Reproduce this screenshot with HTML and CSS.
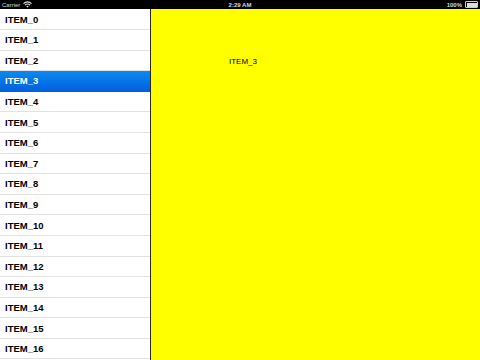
FILE: index.html
```html
<!DOCTYPE html>
<html>
<head>
    <title>Split View</title>
    <link rel="stylesheet" href="styles.css">
</head>
<body>
    <div class="status-bar">
        <div class="status-left">
            <span>Carrier</span>
            <svg class="wifi" width="9" height="7" viewBox="0 0 9 7">
                <path d="M0.5 2.6 A5.5 5.5 0 0 1 8.5 2.6" fill="none" stroke="#ddd" stroke-width="1.1"/>
                <path d="M2 4.1 A3.4 3.4 0 0 1 7 4.1" fill="none" stroke="#ddd" stroke-width="1.1"/>
                <path d="M4.5 6.6 L3.3 5.4 A1.7 1.7 0 0 1 5.7 5.4 Z" fill="#ddd"/>
            </svg>
        </div>
        <div class="status-time">2:29 AM</div>
        <div class="status-right">
            <span>100%</span>
            <span class="battery"><span class="battery-fill"></span></span>
        </div>
    </div>

    <div class="split">
        <ul class="master" id="master"></ul>
        <div class="detail">
            <div class="detail-label" id="detail-label">ITEM_3</div>
        </div>
    </div>

    <script>
        // Build the item list
        const master = document.getElementById('master');
        for (let i = 0; i < 17; i++) {
            const row = document.createElement('li');
            row.className = 'row' + (i === 3 ? ' selected' : '');
            row.textContent = 'ITEM_' + i;
            master.appendChild(row);
        }
    </script>
</body>
</html>
```
FILE: styles.css
```css
body {
    margin: 0;
    width: 480px;
    height: 360px;
    overflow: hidden;
    font-family: "Liberation Sans", Arial, sans-serif;
    background-color: #000;
}
.status-bar {
    height: 9.4px;
    background-color: #000;
    color: #d8d8d8;
    font-size: 6px;
    font-weight: bold;
    display: flex;
    align-items: center;
    justify-content: space-between;
    padding: 0 2px 0 2px;
    position: relative;
}
.status-left,
.status-right {
    display: flex;
    align-items: center;
    gap: 3px;
}
.status-left span {
    font-weight: normal;
}
.status-time {
    position: absolute;
    left: 0;
    right: 0;
    text-align: center;
}
.battery {
    width: 10px;
    height: 4px;
    border: 1px solid #ccc;
    border-radius: 1px;
    padding: 0.5px;
    box-sizing: content-box;
    display: flex;
}
.battery-fill {
    flex: 1;
    background-color: #ddd;
}
.split {
    display: flex;
    height: 350.6px;
}
.master {
    width: 150px;
    margin: 0;
    padding: 0;
    list-style: none;
    background-color: #fff;
    border-right: 1px solid #2a2a2a;
    overflow: hidden;
}
.row {
    height: 20.6px;
    box-sizing: border-box;
    border-bottom: 1px solid #e2e2e2;
    padding-left: 5px;
    display: flex;
    align-items: center;
    font-size: 9.5px;
    font-weight: bold;
    color: #000;
}
.row.selected {
    background: linear-gradient(#0a8af0, #0060de);
    color: #fff;
    border-bottom-color: #0a5fc8;
}
.detail {
    flex: 1;
    background-color: #ffff00;
}
.detail-label {
    margin: 48px 0 0 78px;
    font-size: 8px;
    color: #000;
}
```
